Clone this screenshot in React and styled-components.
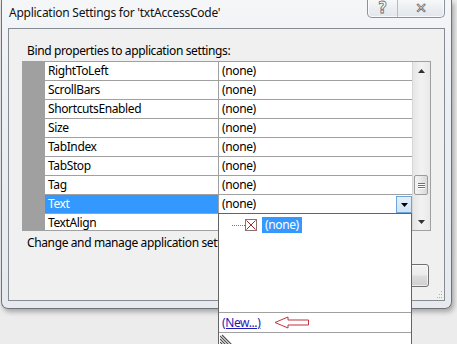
import React from 'react';
import styled, { createGlobalStyle } from 'styled-components';

const GlobalStyle = createGlobalStyle`
  html, body { margin: 0; padding: 0; }
  body {
    background: #ececec;
    overflow: hidden;
    width: 457px;
    height: 344px;
    font-family: "Noto Sans", "Open Sans", sans-serif;
    font-size: 12px;
    letter-spacing: -0.38px;
    color: #000;
  }
`;

const Window = styled.div`
  position: relative;
  box-sizing: border-box;
  margin-left: 1px;
  width: 451px;
  height: 309px;
  border: 1px solid #6e737a;
  border-top: none;
  border-radius: 0 0 7px 7px;
  background: linear-gradient(180deg, #f4f6f8 0%, #eceff3 30%, #e6eaee 100%);
  box-shadow: 2px 3px 5px rgba(0, 0, 0, 0.3);
  padding-left: 6px;
  display: flex;
  flex-direction: column;
`;

const TitleBar = styled.div`
  height: 28px;
  display: flex;
  justify-content: space-between;
  align-items: flex-start;
`;

const Title = styled.div`
  margin: 5px 0 0 1px;
  line-height: 16px;
  font-size: 12px;
  letter-spacing: -0.25px;
  color: #111;
  text-shadow: 0 0 6px #fff;
  white-space: nowrap;
`;

const Captions = styled.div`
  display: flex;
  margin: -1px 6px 0 0;
  height: 19px;
  box-sizing: border-box;
  border: 1px solid #8a929b;
  border-top: none;
  border-radius: 0 0 5px 5px;
  background: linear-gradient(180deg, #f8f9fb 0%, #eceff2 50%, #e2e6ea 100%);
  box-shadow: inset 0 0 0 1px rgba(255, 255, 255, 0.7);
  overflow: hidden;
`;

const CaptionBtn = styled.div`
  width: ${p => p.$w}px;
  display: flex;
  align-items: center;
  justify-content: center;
  border-left: ${p => (p.$divider ? '1px solid #b5bcc4' : 'none')};
  font-family: "DejaVu Sans", sans-serif;
  font-size: ${p => p.$size}px;
  font-weight: bold;
  letter-spacing: 0;
  color: #fbfbfb;
  -webkit-text-stroke: 0.8px #6a6f75;
  line-height: 1;
`;

const Client = styled.div`
  position: relative;
  box-sizing: border-box;
  width: 437px;
  height: 273px;
  border: 1px solid #878c92;
  background: #f0f0f0;
  display: flex;
  flex-direction: column;
`;

const Label = styled.div`
  margin: 14px 0 0 18px;
  line-height: 16px;
  white-space: nowrap;
`;

const Grid = styled.div`
  margin: 2px 0 0 13px;
  box-sizing: border-box;
  width: 409px;
  height: 170px;
  border: 1px solid #a0a0a0;
  display: flex;
  background: #fff;
`;

const Rows = styled.div`
  flex: 1;
  overflow: hidden;
`;

const Row = styled.div`
  display: grid;
  grid-template-columns: 22px 173px 1fr;
  height: 19px;
`;

const HeaderCell = styled.div`
  background: #a0a0a0;
`;

const NameCell = styled.div`
  box-sizing: border-box;
  border-bottom: 1px solid #a0a0a0;
  padding-left: 3px;
  line-height: 18px;
  white-space: nowrap;
  background: ${p => (p.$selected ? '#3399ff' : '#fff')};
  color: ${p => (p.$selected ? '#fff' : '#000')};
`;

const ValueCell = styled.div`
  position: relative;
  box-sizing: border-box;
  border-bottom: 1px solid #a0a0a0;
  border-left: 1px solid #a0a0a0;
  padding-left: 3px;
  line-height: 18px;
  white-space: nowrap;
  display: flex;
  justify-content: space-between;
`;

const DropButton = styled.div`
  box-sizing: border-box;
  width: 16px;
  height: 17px;
  margin-top: 1px;
  border: 1px solid #6da4d9;
  background: linear-gradient(180deg, #e3f0fb 0%, #cfe4f7 100%);
  display: flex;
  align-items: center;
  justify-content: center;
`;

const ScrollBar = styled.div`
  width: 18px;
  box-sizing: border-box;
  border-left: 1px solid #d6d6d6;
  background: linear-gradient(90deg, #e6e6e6 0%, #f2f2f2 50%, #e9e9e9 100%);
  display: flex;
  flex-direction: column;
`;

const ArrowBox = styled.div`
  height: 17px;
  display: flex;
  align-items: center;
  justify-content: center;
`;

const Track = styled.div`
  flex: 1;
  position: relative;
`;

const Thumb = styled.div`
  position: absolute;
  left: 1px;
  right: 2px;
  top: 96px;
  height: 20px;
  box-sizing: border-box;
  border: 1px solid #9b9b9b;
  border-radius: 2px;
  background: linear-gradient(90deg, #f4f4f4 0%, #e8e8e8 50%, #d9d9d9 100%);
  display: flex;
  flex-direction: column;
  align-items: center;
  justify-content: center;
  gap: 1px;
`;

const Grip = styled.span`
  width: 7px;
  height: 1px;
  background: #707070;
  box-shadow: 0 1px 0 #fff;
`;

const Description = styled.div`
  margin: 4px 0 0 18px;
  line-height: 16px;
  white-space: nowrap;
`;

const ButtonRow = styled.div`
  margin: auto 15px 13px 0;
  display: flex;
  justify-content: flex-end;
  gap: 6px;
`;

const Button = styled.div`
  box-sizing: border-box;
  width: 75px;
  height: 23px;
  border: 1px solid #707070;
  border-radius: 3px;
  background: linear-gradient(180deg, #f3f3f3 0%, #ebebeb 48%, #dddddd 52%, #cfcfcf 100%);
  box-shadow: inset 0 0 0 1px rgba(255, 255, 255, 0.6);
  display: flex;
  align-items: center;
  justify-content: center;
`;

const SizeGrip = styled.svg`
  position: absolute;
  right: 1px;
  bottom: 1px;
`;

const Popup = styled.div`
  position: absolute;
  left: 216px;
  top: 213px;
  width: 194px;
  height: 150px;
  box-sizing: border-box;
  border: 1px solid #646464;
  background: #fff;
  display: flex;
  flex-direction: column;
  z-index: 5;
`;

const TreeArea = styled.div`
  height: 99px;
  box-sizing: border-box;
  border-bottom: 1px solid #a0a0a0;
  padding-top: 3px;
`;

const TreeItem = styled.div`
  display: flex;
  align-items: center;
  height: 16px;
  padding-left: 13px;
`;

const Dots = styled.span`
  width: 13px;
  height: 0;
  border-top: 1px dotted #7a7a7a;
`;

const NodeText = styled.span`
  margin-left: 5px;
  padding: 0 3px;
  height: 16px;
  line-height: 16px;
  background: #3399ff;
  color: #fff;
`;

const LinkRow = styled.div`
  height: 20px;
  box-sizing: border-box;
  border-bottom: 1px solid #a0a0a0;
  display: flex;
  align-items: center;
  padding-left: 3px;
`;

const NewLink = styled.a`
  color: #1c1cb4;
  text-decoration: underline;
  line-height: 16px;
`;

const PointerArrow = styled.svg`
  margin-left: 14px;
`;

const PopupGrip = styled.svg`
  margin: 1px 0 0 1px;
`;

const properties = [
  'RightToLeft',
  'ScrollBars',
  'ShortcutsEnabled',
  'Size',
  'TabIndex',
  'TabStop',
  'Tag',
  'Text',
  'TextAlign',
];

const TriUp = () => (
  <svg width="7" height="4" viewBox="0 0 7 4">
    <path d="M0 4 L3.5 0 L7 4 Z" fill="#333" />
  </svg>
);

const TriDown = ({ color = '#333' }) => (
  <svg width="7" height="4" viewBox="0 0 7 4">
    <path d="M0 0 L7 0 L3.5 4 Z" fill={color} />
  </svg>
);

export default function App() {
  return (
    <>
      <GlobalStyle />
      <Window>
        <TitleBar>
          <Title>Application Settings for 'txtAccessCode'</Title>
          <Captions>
            <CaptionBtn $w={29} $size={15}>?</CaptionBtn>
            <CaptionBtn $w={46} $size={14} $divider>✕</CaptionBtn>
          </Captions>
        </TitleBar>
        <Client>
          <Label>Bind properties to application settings:</Label>
          <Grid>
            <Rows>
              {properties.map(name => {
                const selected = name === 'Text';
                return (
                  <Row key={name}>
                    <HeaderCell />
                    <NameCell $selected={selected}>{name}</NameCell>
                    <ValueCell>
                      <span>(none)</span>
                      {selected && (
                        <DropButton>
                          <TriDown color="#000" />
                        </DropButton>
                      )}
                    </ValueCell>
                  </Row>
                );
              })}
            </Rows>
            <ScrollBar>
              <ArrowBox>
                <TriUp />
              </ArrowBox>
              <Track>
                <Thumb>
                  <Grip />
                  <Grip />
                  <Grip />
                </Thumb>
              </Track>
              <ArrowBox>
                <TriDown />
              </ArrowBox>
            </ScrollBar>
          </Grid>
          <Description>Change and manage application settings for this component.</Description>
          <ButtonRow>
            <Button>OK</Button>
            <Button>Cancel</Button>
          </ButtonRow>
          <SizeGrip width="8" height="9" viewBox="0 0 8 9">
            <g fill="#b0b0b0">
              <rect x="6" y="1" width="1" height="1" />
              <rect x="4" y="4" width="1" height="1" />
              <rect x="6" y="4" width="1" height="1" />
              <rect x="2" y="7" width="1" height="1" />
              <rect x="4" y="7" width="1" height="1" />
              <rect x="6" y="7" width="1" height="1" />
            </g>
          </SizeGrip>
        </Client>
        <Popup>
          <TreeArea>
            <TreeItem>
              <Dots />
              <svg width="12" height="12" viewBox="0 0 12 12">
                <rect x="0.5" y="0.5" width="11" height="11" fill="#fff" stroke="#8a7070" />
                <path d="M1.5 1.5 L10.5 10.5 M10.5 1.5 L1.5 10.5" stroke="#9c2a2a" strokeWidth="1" />
              </svg>
              <NodeText>(none)</NodeText>
            </TreeItem>
          </TreeArea>
          <LinkRow>
            <NewLink>(New...)</NewLink>
            <PointerArrow width="36" height="13" viewBox="0 0 36 13">
              <path
                d="M1 6.5 L14 1 L14 4 L34.5 4 L34.5 9 L14 9 L14 12 Z"
                fill="none"
                stroke="#c5303e"
                strokeWidth="1"
              />
            </PointerArrow>
          </LinkRow>
          <PopupGrip width="14" height="14" viewBox="0 0 14 14">
            <path
              d="M0 2 L11 13 M0 5 L8 13 M0 8 L5 13 M2 1 L13 12"
              stroke="#505050"
              strokeWidth="1.2"
            />
          </PopupGrip>
        </Popup>
      </Window>
    </>
  );
}
